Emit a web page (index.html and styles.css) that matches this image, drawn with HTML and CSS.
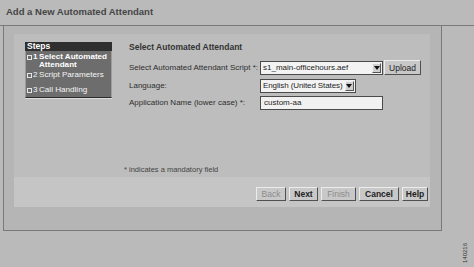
FILE: index.html
```html
<!DOCTYPE html>
<html>
<head>
<meta charset="utf-8">
<link rel="stylesheet" href="styles.css">
</head>
<body>
<div class="title">Add a New Automated Attendant</div>
<div class="rule"></div>
<div class="frame">
  <div class="panel">
    <div class="content">
      <div class="main">
        <div class="steps">
          <div class="steps-head">Steps</div>
          <ul class="steps-list">
            <li class="step current"><span class="box"></span><span class="num">1</span><span class="txt">Select Automated Attendant</span></li>
            <li class="step s2"><span class="box"></span><span class="num">2</span><span class="txt">Script Parameters</span></li>
            <li class="step s3"><span class="box"></span><span class="num">3</span><span class="txt">Call Handling</span></li>
          </ul>
        </div>
        <div class="form">
          <div class="form-title">Select Automated Attendant</div>
          <div class="row r1">
            <span class="label">Select Automated Attendant Script *:</span>
            <div class="select wide"><span class="val">s1_main-officehours.aef</span><span class="arrow"><svg width="6" height="4" viewBox="0 0 6 4"><path d="M0 0H6L3 4Z" fill="#111"/></svg></span></div>
            <span class="btn upload">Upload</span>
          </div>
          <div class="row r2">
            <span class="label">Language:</span>
            <div class="select lang"><span class="val">English (United States)</span><span class="arrow"><svg width="6" height="4" viewBox="0 0 6 4"><path d="M0 0H6L3 4Z" fill="#111"/></svg></span></div>
          </div>
          <div class="row r3">
            <span class="label">Application Name (lower case) *:</span>
            <div class="input">custom-aa</div>
          </div>
        </div>
      </div>
      <div class="note">* indicates a mandatory field</div>
    </div>
    <div class="actions">
      <span class="btn act disabled w-back">Back</span>
      <span class="btn act w-next">Next</span>
      <span class="btn act disabled w-finish">Finish</span>
      <span class="btn act w-cancel">Cancel</span>
      <span class="btn act w-help">Help</span>
    </div>
  </div>
</div>
<div class="footer"><span class="fig">140216</span></div>
</body>
</html>
```
FILE: styles.css
```css
html, body {
  margin: 0;
  padding: 0;
}
body {
  width: 474px;
  height: 267px;
  overflow: hidden;
  background: #bababa;
  font-family: "Liberation Sans", Arial, sans-serif;
  color: #333;
}
.title {
  height: 25px;
  box-sizing: border-box;
  padding: 6px 0 0 6px;
  font-size: 9.5px;
  line-height: 12px;
  font-weight: bold;
  color: #454545;
}
.rule {
  height: 1px;
  background: #7a7a7a;
}
.frame {
  margin-left: 3px;
  width: 439px;
  height: 205px;
  box-sizing: border-box;
  border: 1px solid #7a7a7a;
  border-top: none;
  background: #b5b5b5;
  padding-top: 8px;
}
.panel {
  margin-left: 10px;
  width: 416px;
}
.content {
  height: 143px;
  background: #bdbdbd;
  display: flex;
  flex-direction: column;
}
.main {
  display: flex;
}
.steps {
  margin: 8px 0 0 11px;
  width: 87px;
}
.steps-head {
  background: #2f2f2f;
  color: #fff;
  font-weight: bold;
  font-size: 8.5px;
  height: 9px;
  line-height: 9px;
  padding-left: 2px;
}
.steps-list {
  list-style: none;
  margin: 0;
  padding: 2px 0 3px 1px;
  background: #6d6d6d;
  border-left: 1px solid #9c9c9c;
  border-right: 1px solid #9c9c9c;
  border-bottom: 1px solid #2a2a2a;
  box-shadow: 0 1px 0 #dcdcdc;
  color: #f4f4f4;
  font-size: 8.1px;
  line-height: 8px;
}
.step {
  display: flex;
  align-items: flex-start;
}
.step.current {
  font-weight: bold;
  color: #fff;
}
.step.s2 {
  margin-top: 2px;
}
.step.s3 {
  margin-top: 7px;
}
.box {
  flex: none;
  width: 3px;
  height: 3px;
  border: 1px solid #e6e6e6;
  margin: 2px 1px 0 0;
}
.num {
  flex: none;
  width: 6px;
}
.txt {
  flex: 1;
}
.form {
  margin: 8px 0 0 17px;
  font-size: 8px;
  color: #2e2e2e;
}
.form-title {
  font-weight: bold;
  font-size: 8.5px;
  line-height: 10px;
  color: #333;
}
.row {
  display: flex;
  align-items: center;
  height: 15px;
}
.r1 { margin-top: 8px; }
.r2 { margin-top: 3px; }
.r3 { margin-top: 2px; }
.label {
  width: 131px;
  flex: none;
  white-space: nowrap;
}
.select {
  height: 14px;
  box-sizing: border-box;
  border: 1px solid #4a4a4a;
  background: #f3f3f3;
  display: flex;
  align-items: center;
  padding-left: 2px;
  color: #1e1e1e;
}
.select .val {
  white-space: nowrap;
}
.select.wide { width: 123px; }
.select.wide .val { flex: 1; overflow: hidden; }
.select.lang { width: auto; }
.select.lang .val { margin-right: 2px; letter-spacing: -0.1px; }
.arrow {
  flex: none;
  width: 9px;
  height: 10px;
  margin-right: 1px;
  box-sizing: border-box;
  background: #cfcfcf;
  border: 1px solid;
  border-color: #f0f0f0 #555 #555 #f0f0f0;
  display: flex;
  align-items: center;
  justify-content: center;
}
.input {
  width: 123px;
  height: 14px;
  box-sizing: border-box;
  border: 1px solid #4a4a4a;
  background: #f1f1f1;
  padding-left: 3px;
  line-height: 12px;
  color: #1e1e1e;
}
.btn {
  display: inline-flex;
  align-items: center;
  justify-content: center;
  box-sizing: border-box;
  height: 15px;
  background: #c8c8c8;
  border: 1px solid;
  border-color: #ececec #505050 #505050 #ececec;
  color: #222;
  font-size: 8.5px;
}
.upload {
  width: 37px;
  margin-left: 1px;
}
.note {
  margin-top: auto;
  margin-bottom: 3px;
  padding-left: 110px;
  font-size: 7.5px;
  line-height: 8px;
  color: #454545;
}
.actions {
  height: 30px;
  box-sizing: border-box;
  background: #c5c5c5;
  display: flex;
  justify-content: flex-end;
  align-items: flex-start;
  gap: 2px;
  padding: 10px 2px 0 0;
}
.act {
  height: 14px;
  font-weight: bold;
}
.act.disabled {
  color: #8c8c8c;
  font-weight: normal;
}
.w-back { width: 30px; }
.w-next { width: 29px; margin-left: 1px; }
.w-finish { width: 35px; margin-left: 1px; }
.w-cancel { width: 40px; margin-left: 1px; }
.w-help { width: 26px; margin-left: 1px; }
.footer {
  height: 36px;
  display: flex;
  justify-content: flex-end;
  align-items: flex-start;
}
.fig {
  writing-mode: vertical-rl;
  transform: rotate(180deg);
  font-size: 6px;
  line-height: 7px;
  margin: 12px 5px 0 0;
  color: #333;
}
```
